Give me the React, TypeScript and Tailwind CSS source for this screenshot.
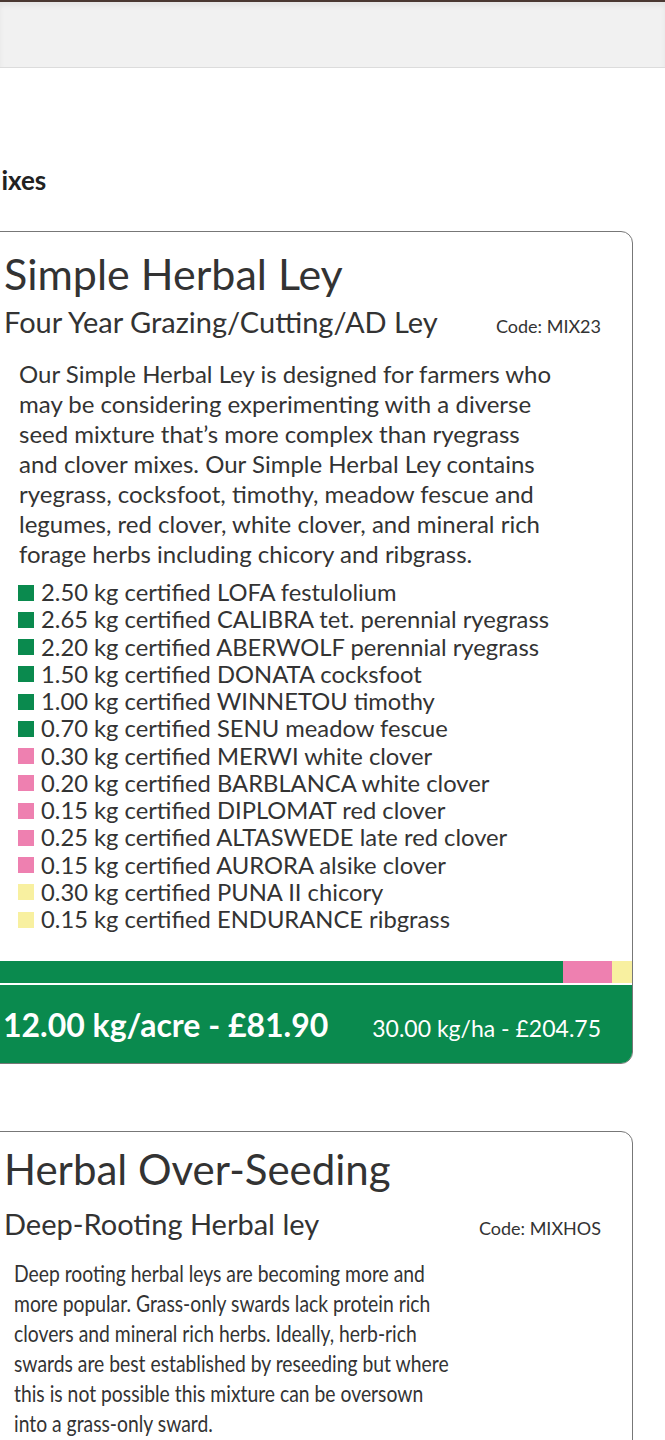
import React from 'react';

type Kind = 'grass' | 'clover' | 'herb';

const KIND_COLOURS: Record<Kind, string> = {
  grass: 'bg-[#0a8a4e]',
  clover: 'bg-[#ee80b0]',
  herb: 'bg-[#f8f0a0]',
};

const SIMPLE_HERBAL: { kg: string; name: string; kind: Kind }[] = [
  { kg: '2.50', name: 'LOFA festulolium', kind: 'grass' },
  { kg: '2.65', name: 'CALIBRA tet. perennial ryegrass', kind: 'grass' },
  { kg: '2.20', name: 'ABERWOLF perennial ryegrass', kind: 'grass' },
  { kg: '1.50', name: 'DONATA cocksfoot', kind: 'grass' },
  { kg: '1.00', name: 'WINNETOU timothy', kind: 'grass' },
  { kg: '0.70', name: 'SENU meadow fescue', kind: 'grass' },
  { kg: '0.30', name: 'MERWI white clover', kind: 'clover' },
  { kg: '0.20', name: 'BARBLANCA white clover', kind: 'clover' },
  { kg: '0.15', name: 'DIPLOMAT red clover', kind: 'clover' },
  { kg: '0.25', name: 'ALTASWEDE late red clover', kind: 'clover' },
  { kg: '0.15', name: 'AURORA alsike clover', kind: 'clover' },
  { kg: '0.30', name: 'PUNA II chicory', kind: 'herb' },
  { kg: '0.15', name: 'ENDURANCE ribgrass', kind: 'herb' },
];

const FONT = { fontFamily: "Lato, 'Open Sans', sans-serif" };

export default function App() {
  return (
    <div className="min-h-[1440px] bg-white overflow-hidden text-[#333]" style={FONT}>
      {/* site header strip */}
      <header className="h-[68px] border-t-2 border-b border-t-[#4a3832] border-b-[#dcdcdc] bg-[#f1f1f1] shadow-[inset_0_4px_5px_rgba(0,0,0,0.05)]" />

      <main className="-ml-[16px] w-[649px]">
        <h2 className="-ml-[7px] mt-[96px] mb-[35px] text-[26px] leading-[32px] font-bold text-[#222]">Mixes</h2>

        {/* Simple Herbal Ley */}
        <section className="rounded-[12px] border border-[#777] overflow-hidden">
          <div className="pl-[19px] pr-[31px] pt-[17px]">
            <h3 className="text-[43px] leading-[50px]">Simple Herbal Ley</h3>
            <div className="mt-[6px] flex items-baseline justify-between">
              <span className="text-[29px] leading-[34px]">Four Year Grazing/Cutting/AD Ley</span>
              <span className="text-[18px] leading-[22px]">Code: MIX23</span>
            </div>
          </div>

          <p className="mt-[20px] ml-[34px] w-[538px] text-[24px] leading-[30px]">
            Our Simple Herbal Ley is designed for farmers who may be considering experimenting with a diverse seed
            mixture that’s more complex than ryegrass and clover mixes. Our Simple Herbal Ley contains ryegrass,
            cocksfoot, timothy, meadow fescue and legumes, red clover, white clover, and mineral rich forage herbs
            including chicory and ribgrass.
          </p>

          <ul className="mt-[10px] pl-[33px] text-[23.75px] leading-[27.25px]">
            {SIMPLE_HERBAL.map((s) => (
              <li key={s.name} className="flex items-center gap-[7px]">
                <span className={`w-[16px] h-[16px] shrink-0 ${KIND_COLOURS[s.kind]}`} />
                <span>{s.kg} kg certified {s.name}</span>
              </li>
            ))}
          </ul>

          <div className="mt-[27.5px] flex h-[24px] border-b-2 border-white">
            <div className="flex-1 bg-[#0a8a4e]" />
            <div className="w-[49px] bg-[#ee80b0]" />
            <div className="w-[20px] bg-[#f8f0a0]" />
          </div>
          <div className="h-[78px] bg-[#0a8a4e] pl-[18px] pr-[31px] pt-[21px] flex items-baseline justify-between text-white">
            <span className="text-[32px] leading-[38px] font-bold">12.00 kg/acre - £81.90</span>
            <span className="text-[23px] leading-[28px]">30.00 kg/ha - £204.75</span>
          </div>
        </section>

        {/* Herbal Over-Seeding */}
        <section className="mt-[67px] rounded-[12px] border border-[#777] overflow-hidden pb-[40px]">
          <div className="pl-[19px] pr-[31px] pt-[12px]">
            <h3 className="text-[42px] leading-[50px]">Herbal Over-Seeding</h3>
            <div className="mt-[13px] flex items-baseline justify-between">
              <span className="text-[29px] leading-[34px]">Deep-Rooting Herbal ley</span>
              <span className="text-[18px] leading-[22px]">Code: MIXHOS</span>
            </div>
          </div>
          <p className="mt-[17px] ml-[29px] w-[545px] origin-left scale-x-[0.805] text-[24px] leading-[30px]">
            Deep rooting herbal leys are becoming more and more popular. Grass-only swards lack protein rich clovers
            and mineral rich herbs. Ideally, herb-rich swards are best established by reseeding but where this is not
            possible this mixture can be oversown into a grass-only sward.
          </p>
        </section>
      </main>
    </div>
  );
}
